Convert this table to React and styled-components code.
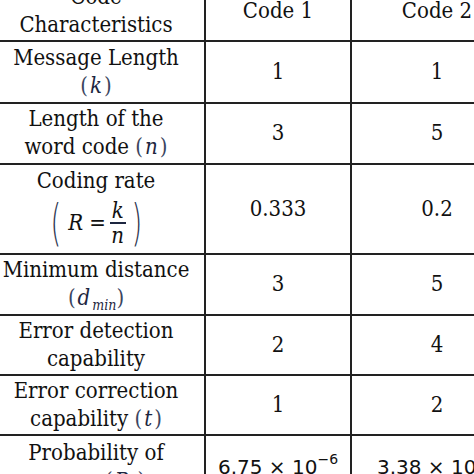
import React from 'react';
import styled, { createGlobalStyle } from 'styled-components';

const GlobalStyle = createGlobalStyle`
  html, body {
    margin: 0;
    padding: 0;
    background: #ffffff;
    overflow: hidden;
  }
  body {
    font-family: "DejaVu Serif", "Liberation Serif", serif;
    color: #111111;
  }
`;

const Page = styled.div`
  width: 474px;
  height: 474px;
  overflow: hidden;
`;

const Table = styled.table`
  border-collapse: collapse;
  table-layout: fixed;
  width: 536px;
  margin-left: -14px;
  margin-top: -21px;
`;

const Col = styled.col`
  width: ${(p) => p.$w}px;
`;

const Row = styled.tr`
  height: ${(p) => p.$h}px;
`;

const Cell = styled.td`
  border: 2px solid #222222;
  text-align: center;
  vertical-align: middle;
  padding: 0;
  font-family: "DejaVu Serif", "Liberation Serif", serif;
  font-stretch: condensed;
  font-size: 22px;
  line-height: 28px;
  color: #111111;
  white-space: nowrap;
`;

const Math = styled.span`
  color: #1d2640;
`;

const Paren = styled.span`
  color: #3b4560;
`;

const Var = styled.i`
  margin: 0 2px;
`;

const Sub = styled.sub`
  font-style: italic;
  font-size: 14px;
  line-height: 0;
  vertical-align: -5px;
`;

const Formula = styled.span`
  display: inline-flex;
  align-items: center;
  gap: 4px;
  height: 56px;
  vertical-align: top;
`;

const BigParen = styled.span`
  font-family: "DejaVu Sans", sans-serif;
  font-weight: 200;
  font-size: 50px;
  line-height: 56px;
  color: #2c3550;
  margin: 0 -3px;
  transform: scaleX(0.55);
`;

const Fraction = styled.span`
  display: inline-flex;
  flex-direction: column;
  align-items: center;
  line-height: 23px;
  font-style: italic;
`;

const Bar = styled.span`
  display: block;
  width: 16px;
  height: 2px;
  background: #1d2640;
`;

const Sup = styled.sup`
  font-size: 14px;
  line-height: 0;
  vertical-align: 10px;
`;

const Value = styled.span`
  font-family: "DejaVu Sans", sans-serif;
  font-stretch: normal;
  font-size: 20px;
`;

const App = () => (
  <Page>
    <GlobalStyle />
    <Table>
      <colgroup>
        <Col $w={218} />
        <Col $w={146} />
        <Col $w={172} />
      </colgroup>
      <tbody>
        <Row $h={61}>
          <Cell>Code<br />Characteristics</Cell>
          <Cell>Code 1</Cell>
          <Cell>Code 2</Cell>
        </Row>
        <Row $h={61.5}>
          <Cell>
            Message Length<br />
            <Math><Paren>(</Paren><Var>k</Var><Paren>)</Paren></Math>
          </Cell>
          <Cell>1</Cell>
          <Cell>1</Cell>
        </Row>
        <Row $h={61.5}>
          <Cell>
            Length of the<br />
            word code <Math><Paren>(</Paren><Var>n</Var><Paren>)</Paren></Math>
          </Cell>
          <Cell>3</Cell>
          <Cell>5</Cell>
        </Row>
        <Row $h={89.5}>
          <Cell>
            Coding rate<br />
            <Formula>
              <BigParen>(</BigParen>
              <Var>R</Var>
              <span>=</span>
              <Fraction>
                <span>k</span>
                <Bar />
                <span>n</span>
              </Fraction>
              <BigParen>)</BigParen>
            </Formula>
          </Cell>
          <Cell>0.333</Cell>
          <Cell>0.2</Cell>
        </Row>
        <Row $h={61.5}>
          <Cell>
            Minimum distance<br />
            <Math><Paren>(</Paren><Var>d</Var><Sub>min</Sub><Paren>)</Paren></Math>
          </Cell>
          <Cell>3</Cell>
          <Cell>5</Cell>
        </Row>
        <Row $h={59.5}>
          <Cell>Error detection<br />capability</Cell>
          <Cell>2</Cell>
          <Cell>4</Cell>
        </Row>
        <Row $h={60.5}>
          <Cell>
            Error correction<br />
            capability <Math><Paren>(</Paren><Var>t</Var><Paren>)</Paren></Math>
          </Cell>
          <Cell>1</Cell>
          <Cell>2</Cell>
        </Row>
        <Row $h={64}>
          <Cell>
            Probability of<br />
            error <Math><Paren>(</Paren><Var>P</Var><Sub>e</Sub><Paren>)</Paren></Math>
          </Cell>
          <Cell><Value>6.75 × 10<Sup>−6</Sup></Value></Cell>
          <Cell><Value>3.38 × 10<Sup>−9</Sup></Value></Cell>
        </Row>
      </tbody>
    </Table>
  </Page>
);

export default App;
